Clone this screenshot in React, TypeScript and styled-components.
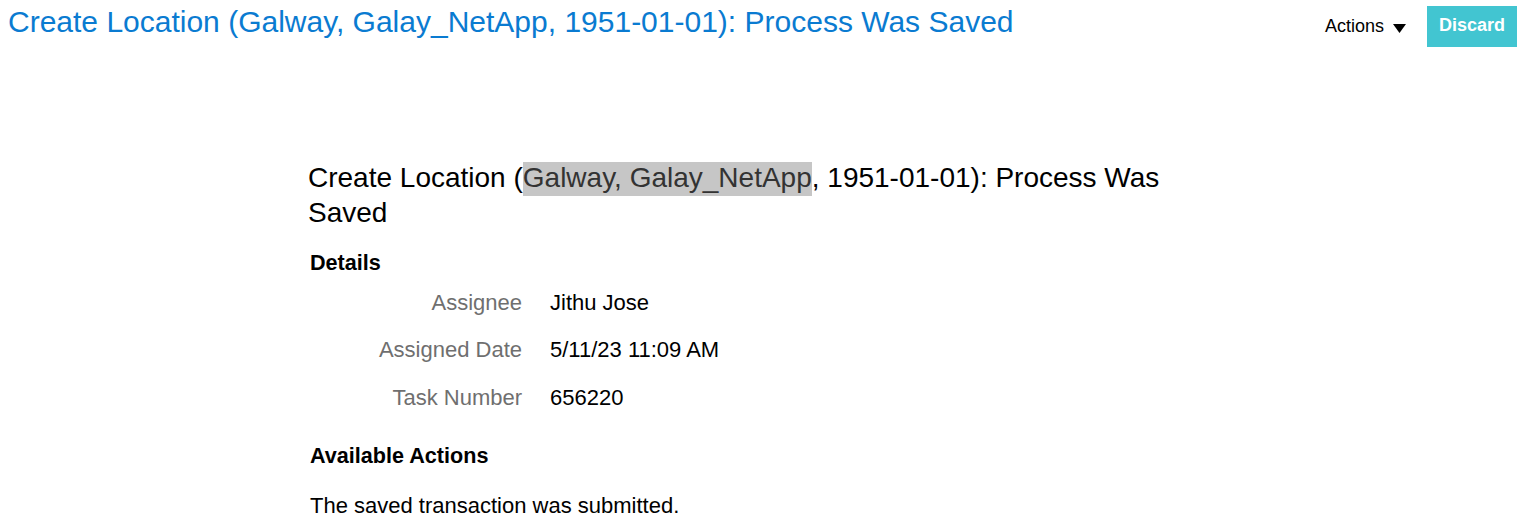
import React from "react";
import styled, { createGlobalStyle } from "styled-components";

const GlobalStyle = createGlobalStyle`
  html, body {
    margin: 0;
    padding: 0;
    background: #ffffff;
    font-family: "Liberation Sans", Arial, sans-serif;
    color: #000;
  }
`;

const Header = styled.header`
  display: flex;
  justify-content: space-between;
  align-items: flex-start;
  height: 47px;
  padding: 0 14px 0 8px;
`;

const PageTitle = styled.h1`
  margin: 0;
  font-size: 30px;
  font-weight: normal;
  line-height: 44px;
  color: #0a7bd1;
  white-space: nowrap;
`;

const HeaderActions = styled.div`
  display: flex;
  align-items: center;
  margin-top: 6px;
`;

const ActionsMenu = styled.button`
  display: flex;
  align-items: center;
  gap: 9px;
  background: none;
  border: none;
  padding: 0;
  margin-right: 21px;
  font-family: inherit;
  font-size: 18px;
  color: #000;
  cursor: pointer;

  svg {
    margin-top: 3px;
  }
`;

const DiscardButton = styled.button`
  width: 90px;
  height: 41px;
  background: #42c5d1;
  border: none;
  color: #fff;
  font-family: inherit;
  font-weight: bold;
  font-size: 18px;
  padding: 0 0 2px;
  cursor: pointer;
`;

const Main = styled.main`
  width: 913px;
  margin: 0 auto;
  padding-top: 113px;
`;

const TaskTitle = styled.h2`
  margin: 0 0 0 -1px;
  font-size: 28px;
  font-weight: normal;
  line-height: 35px;
  color: #000;
`;

const Highlight = styled.span`
  background: #c6c6c6;
  color: #333;
  padding-bottom: 3px;
`;

const SectionHeading = styled.h3<{ $top: number }>`
  margin: ${(p) => p.$top}px 0 0 1px;
  font-size: 21.6px;
  font-weight: bold;
  line-height: 26px;
`;

const DetailList = styled.dl`
  margin: 3px 0 0;
`;

const DetailRow = styled.div`
  display: grid;
  grid-template-columns: 213px 1fr;
  column-gap: 28px;
  padding: 10.75px 0;
  font-size: 22px;
  line-height: 26px;
`;

const Label = styled.dt`
  text-align: right;
  color: #6f6f6f;
`;

const Value = styled.dd`
  margin: 0;
  color: #000;
`;

const Message = styled.p`
  margin: 24px 0 0 1px;
  font-size: 22px;
  line-height: 26px;
`;

const details = [
  { label: "Assignee", value: "Jithu Jose" },
  { label: "Assigned Date", value: "5/11/23 11:09 AM" },
  { label: "Task Number", value: "656220" },
];

export default function App() {
  return (
    <>
      <GlobalStyle />
      <Header>
        <PageTitle>
          Create Location (Galway, Galay_NetApp, 1951-01-01): Process Was Saved
        </PageTitle>
        <HeaderActions>
          <ActionsMenu>
            Actions
            <svg width="13" height="9" viewBox="0 0 13 9">
              <path d="M0 0 L13 0 L6.5 9 Z" fill="#000" />
            </svg>
          </ActionsMenu>
          <DiscardButton>Discard</DiscardButton>
        </HeaderActions>
      </Header>
      <Main>
        <TaskTitle>
          Create Location (<Highlight>Galway, Galay_NetApp</Highlight>,
          1951-01-01): Process Was Saved
        </TaskTitle>
        <SectionHeading $top={20}>Details</SectionHeading>
        <DetailList>
          {details.map((d) => (
            <DetailRow key={d.label}>
              <Label>{d.label}</Label>
              <Value>{d.value}</Value>
            </DetailRow>
          ))}
        </DetailList>
        <SectionHeading $top={21}>Available Actions</SectionHeading>
        <Message>The saved transaction was submitted.</Message>
      </Main>
    </>
  );
}
